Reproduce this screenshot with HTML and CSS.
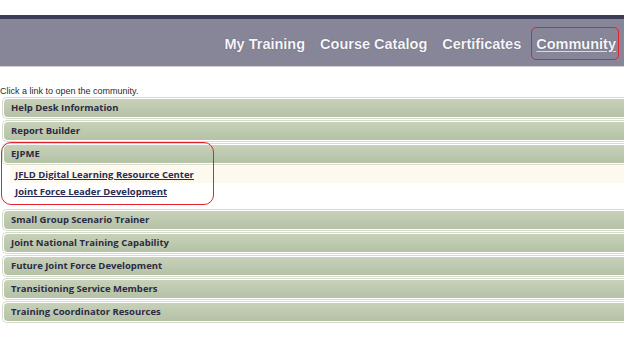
FILE: index.html
```html
<!DOCTYPE html>
<html lang="en">
<head>
<meta charset="utf-8">
<title>Community</title>
<link rel="stylesheet" href="styles.css">
</head>
<body>
<header class="topbar">
  <nav class="nav">
    <a class="nav-link" href="#">My Training</a>
    <a class="nav-link" href="#">Course Catalog</a>
    <a class="nav-link" href="#">Certificates</a>
    <a class="nav-link nav-link-active" href="#">Community</a>
  </nav>
</header>
<main class="content">
  <p class="hint">Click a link to open the community.</p>
  <div class="groups">
    <div class="group"><div class="bar">Help Desk Information</div></div>
    <div class="group"><div class="bar">Report Builder</div></div>
    <div class="group-open">
      <div class="group"><div class="bar">EJPME</div></div>
      <div class="links">
        <div class="link-row link-row-hl"><a class="sub-link" href="#">JFLD Digital Learning Resource Center</a></div>
        <div class="link-row"><a class="sub-link" href="#">Joint Force Leader Development</a></div>
      </div>
    </div>
    <div class="group"><div class="bar">Small Group Scenario Trainer</div></div>
    <div class="group"><div class="bar">Joint National Training Capability</div></div>
    <div class="group"><div class="bar">Future Joint Force Development</div></div>
    <div class="group"><div class="bar">Transitioning Service Members</div></div>
    <div class="group"><div class="bar">Training Coordinator Resources</div></div>
  </div>
</main>
</body>
</html>
```
FILE: styles.css
```css
html, body {
  margin: 0;
  padding: 0;
  background: #ffffff;
  overflow: hidden;
}
body {
  font-family: "Liberation Sans", Arial, sans-serif;
}
.topbar {
  margin-top: 15px;
  border-top: 4px solid #3b3d57;
  border-bottom: 1px solid #cfd0d8;
  background: #868698;
  height: 47px;
  display: flex;
  align-items: center;
  justify-content: flex-end;
}
.nav {
  display: flex;
  align-items: center;
  gap: 15px;
  padding-right: 8px;
  padding-top: 2px;
}
.nav-link {
  font-family: "Liberation Sans", Arial, sans-serif;
  font-weight: bold;
  font-size: 14.5px;
  color: #f6f6f8;
  text-decoration: none;
  text-shadow: 0 0 1px #4a4a5e;
  position: relative;
}
.nav-link:first-child {
  margin-left: 1px;
}
.nav-link-active {
  text-decoration: underline;
  text-decoration-color: #d9d9e3;
  text-underline-offset: 2px;
}
.nav-link-active::after {
  content: "";
  position: absolute;
  left: -5px;
  right: -3px;
  top: -9px;
  bottom: -8px;
  border: 1.5px solid #e3222c;
  border-radius: 5px;
}
.content {
  padding-top: 19px;
}
.hint {
  margin: 0;
  font-size: 9px;
  line-height: 11px;
  color: #2a2a2a;
}
.groups {
  display: flex;
  flex-direction: column;
}
.group {
  margin-left: 2px;
  margin-bottom: 1px;
  border: 1px solid #d5dccc;
  border-right: none;
  border-radius: 5px 0 0 5px;
  padding: 1px 0 1px 1px;
  background: #ffffff;
}
.bar {
  height: 18px;
  line-height: 18px;
  padding-left: 7px;
  border-radius: 4px 0 0 4px;
  background: linear-gradient(to bottom, #c7d1ba 0%, #bcc8ad 60%, #b5c2a6 100%);
  font-family: "Open Sans", "Liberation Sans", sans-serif;
  font-weight: 700;
  font-size: 9.5px;
  color: #2c2a44;
}
.group-open {
  position: relative;
}
.group-open::after {
  content: "";
  position: absolute;
  left: 1px;
  top: -1px;
  width: 211px;
  height: 61px;
  border: 1.5px solid #e3222c;
  border-radius: 10px;
  pointer-events: none;
}
.links {
  padding: 0 0 9px 10px;
  display: flex;
  flex-direction: column;
}
.link-row {
  height: 17px;
  line-height: 13px;
  padding-left: 5px;
}
.link-row-hl {
  background: #fdf9ee;
}
.sub-link {
  font-family: "Open Sans", "Liberation Sans", sans-serif;
  font-weight: 700;
  font-size: 9.5px;
  color: #2a2c55;
  text-decoration: underline;
}
```
